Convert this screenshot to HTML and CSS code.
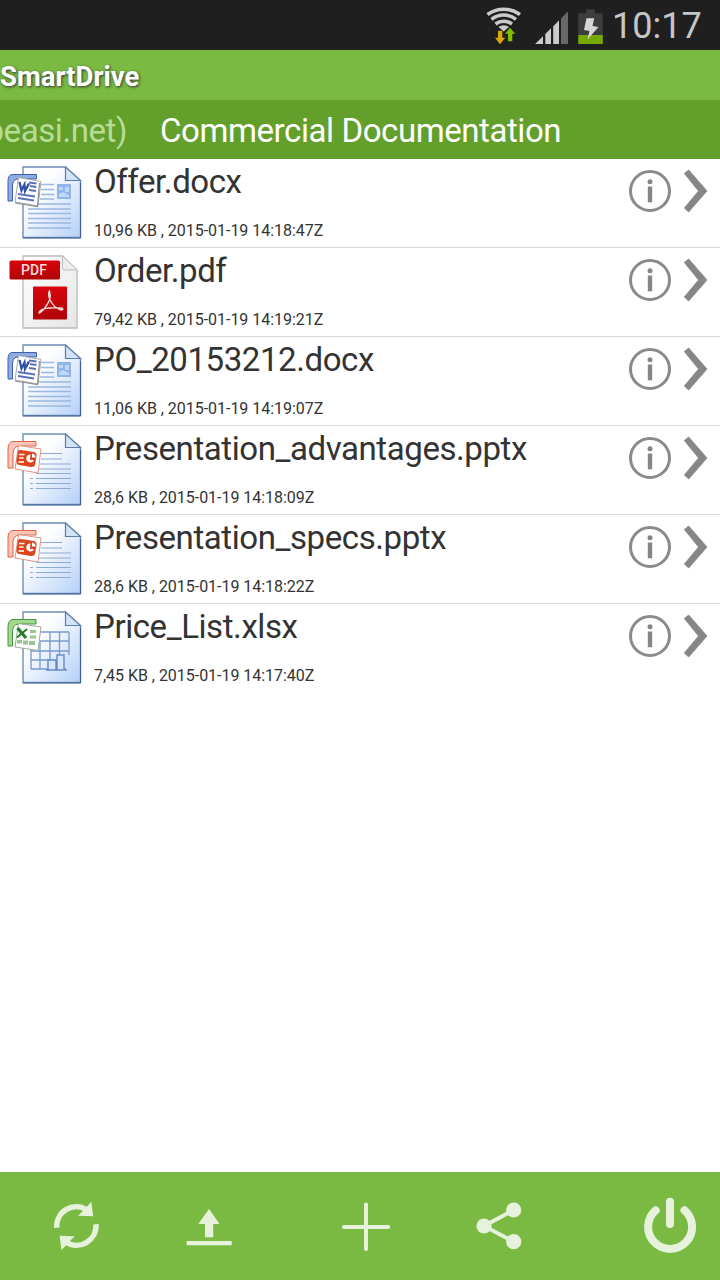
FILE: index.html
```
<!DOCTYPE html>
<html lang="en">

<head>
    <meta charset="UTF-8">
    <meta name="viewport" content="width=device-width, initial-scale=1.0">
    <title>SmartDrive</title>
    <link rel="stylesheet" href="styles.css">
</head>

<body>
    <!-- shared icons -->
    <svg class="defs" width="0" height="0">
        <defs>
            <linearGradient id="paper" x1="0" y1="0" x2="1" y2="1">
                <stop offset="0.3" stop-color="#fff" />
                <stop offset="1" stop-color="#b4d0f8" />
            </linearGradient>
            <linearGradient id="pdfPaper" x1="0" y1="0" x2="1" y2="1">
                <stop offset="0" stop-color="#fff" />
                <stop offset="1" stop-color="#e6e6e6" />
            </linearGradient>
            <linearGradient id="red" x1="0" y1="0" x2="0" y2="1">
                <stop offset="0" stop-color="#d8040c" />
                <stop offset="1" stop-color="#b00508" />
            </linearGradient>
        </defs>
        <symbol id="page" viewBox="0 0 84 88">
            <path d="M23 8H65.500L80.500 22V78.500H23Z" fill="url(#paper)" stroke="#6f8db5" stroke-width="1.400" />
            <path d="M65.500 8V21.500H80.500Z" fill="#d3e3f8" stroke="#5c7eaa" stroke-width="1.200" />
            <path d="M23 79H80.500V24" fill="none" stroke="#3d5f94" stroke-width="1" />
        </symbol>
        <symbol id="docx" viewBox="0 0 84 88">
            <use href="#page" />
            <path d="M41 25.500H54M41 30.500H54M41 35.500H54M40 40H54M28 45H71M28 50H71M28 54.500H71M28 59.500H71M28 64H71M28 69H71" stroke="#9ab8e0" stroke-width="1.300" />
            <rect x="57" y="25" width="14" height="15" fill="#8fb5ea" />
            <path d="M59 28h4v3h-4zM65 28h4v5h-4zM59 35l4-2 6 3v2H59z" fill="#c0d7f6" />
            <path d="M12 15.500H36.500V20H17Q12.500 21 12.500 27V42H8V22Q8 16 12 15.500Z" fill="#8eabe2" stroke="#3f5fae" />
            <path d="M18.500 18.500L41 22.500L38 47L15 43Z" fill="#fff" stroke="#a9a9ae" />
            <path d="M39.500 24L37.500 47.500L15 44" fill="none" stroke="#8c8c90" stroke-width="1.200" />
            <path d="M19.500 23L21.500 31.500L24.500 25.500L25 32L29 24.500" fill="none" stroke="#3451a5" stroke-width="2.300" />
            <path d="M29 23.500L36.500 24.500M30 27L36.500 28M29 31L36 32M18 35L35 37.500M18 39L34 41.500" stroke="#5871ba" stroke-width="1.800" />
        </symbol>
        <symbol id="pdf" viewBox="0 0 84 88">
            <path d="M23 8H62.500L77 22V80H23Z" fill="url(#pdfPaper)" stroke="#bbb" stroke-width="1.300" />
            <path d="M62.500 8V20Q62.500 22 65 22H77Z" fill="#eee" stroke="#bbb" />
            <rect x="9.500" y="12.500" width="50.500" height="19" rx="1.500" fill="url(#red)" />
            <text x="21" y="26.800" class="pdfLabel" textLength="26">PDF</text>
            <rect x="33" y="38.500" width="34" height="33" rx="1" fill="url(#red)" />
            <path d="M49.500 43Q51 48 49.500 52Q46 60 40.500 64.500Q38 66 39.500 63.500Q43 59 61 60Q65 61 61 62Q54 60 50 52Q47.500 45 49.500 43Z" fill="none" stroke="#f4dcdc" stroke-width="1.400" />
        </symbol>
        <symbol id="pptx" viewBox="0 0 84 88">
            <use href="#page" />
            <path d="M41 27.500H62M41 33H62M40 38H71M36 43H71M36 47.500H71M36 52.500H71M36 57.500H71M36 62.500H71M30 52.500h3M30 57.500h3M30 62.500h3" stroke="#8fabd2" stroke-width="1.200" />
            <path d="M13 15.500H36V20H19Q13 21 13 28V42H8V23Q8 16 13 15.500Z" fill="#fbc6b8" stroke="#dd6249" />
            <path d="M18.500 19.500L41 23L38 47L15 43Z" fill="#fff" stroke="#e59582" />
            <path d="M18 25Q19 23.500 21 24L34 26Q37 27 36.500 30L35 39Q34 41.500 31 41L19 39Q16 38 16.500 35Z" fill="#dc441e" />
            <path d="M19 28.500h5.500M19 32h4.500M18.500 36h5.500" stroke="#fff" stroke-width="1.700" />
            <path d="M30.500 28.500A4 4 0 1 0 34 34H30Z" fill="#fff" />
            <path d="M32 27.500V31.500H35.500Q35.500 28 32 27.500Z" fill="#fff" />
        </symbol>
        <symbol id="xlsx" viewBox="0 0 84 88">
            <use href="#page" />
            <path d="M41 28H69M38 37H69M31 47H69M31 56H50M31 65H66M31 46V65M40 38V65M50 28V56M59.500 28V50M69 28V51" fill="none" stroke="#7899ce" stroke-width="1.300" />
            <path d="M48 66V56h8V66M57 66V51h7V66M46 66h21" fill="#d8e6fa" stroke="#6589c2" stroke-width="1.400" />
            <path d="M13 15.500H36V20H18Q12.500 21 12.500 28V42H8V23Q8 16 13 15.500Z" fill="#a4d891" stroke="#40963a" />
            <path d="M18.500 19.500L41 23L38 46.500L15 43Z" fill="#fff" stroke="#9ea99b" />
            <path d="M30 26h6v3h-6zM30 31.500h6v3h-6zM29 37h6v4h-6zM23 36.500h5v4h-5zM17 36h5v3.500h-5z" fill="#9bc58e" />
            <path d="M17.500 24L26 34" stroke="#247f28" stroke-width="3.200" />
            <path d="M27 25L17 33.500" stroke="#247f28" stroke-width="2" />
        </symbol>
        <symbol id="actions" viewBox="0 0 110 88">
            <circle cx="40" cy="32" r="19.500" fill="none" stroke="#8a8a8a" stroke-width="3" />
            <circle cx="40" cy="22.800" r="2.500" fill="#868686" />
            <path d="M37.800 27.500h4.400v15.800h-4.400z" fill="#868686" />
            <path d="M74.300 14.500L78.700 11L97 32L78.700 53L74.300 49L88.500 32Z" fill="#868686" stroke="#868686" stroke-width="0.800" />
        </symbol>
    </svg>

    <div class="statusBar">
        <svg class="wifi" width="36" height="50" viewBox="486 0 36 50">
            <g fill="none" stroke="#cbcbcb" stroke-width="3.500">
                <path d="M487.500 14.500A27.500 27.500 0 0 1 520 14.500" />
                <path d="M491.500 19.300A20 20 0 0 1 516 19.300" />
                <path d="M495.500 24A13.500 13.500 0 0 1 512 24" />
            </g>
            <path d="M498.300 26.800Q503.700 23.500 509 26.800L503.700 31.500Z" fill="#cbcbcb" />
            <path d="M498 30.700h4.300v7h3L500 44.300L495 37.700h3z" fill="#d9a60d" />
            <path d="M510 27.700L515.300 33.700h-3v7.600H508v-7.600h-3z" fill="#84bd00" />
        </svg>
        <svg class="signal" width="34" height="50" viewBox="535 0 34 50">
            <path d="M535 44L543 36.200V44ZM545.300 44V34L551 28.300V44ZM553.200 44V26.200L559 20.500V44Z" fill="#cbcbcb" />
            <path d="M561 44V18.500L568 11.500V44Z" fill="#686868" />
        </svg>
        <svg class="battery" width="25" height="50" viewBox="577.500 0 25 50">
            <path d="M577.700 13.300h8v-4h8.600v4h8V35h-24.600z" fill="#3d3d3d" />
            <path d="M577.700 35h24.600v9h-24.600z" fill="#77a800" />
            <path d="M586 18.300H593.700L592 26L598 27L587 39.500L589 31L583.500 30Z" fill="#d6d6d6" />
        </svg>
        <span class="clock">10:17</span>
    </div>

    <div class="titleBar">SmartDrive</div>

    <div class="pathBar">
        <span class="parent">(peasi.net)</span>
        <span class="current">Commercial Documentation</span>
    </div>

    <ul class="fileList">
        <li>
            <svg class="fileIcon"><use href="#docx" /></svg>
            <div class="fileInfo">
                <div class="name">Offer.docx</div>
                <div class="detail">10,96 KB , 2015-01-19 14:18:47Z</div>
            </div>
            <svg class="actions"><use href="#actions" /></svg>
        </li>
        <li>
            <svg class="fileIcon"><use href="#pdf" /></svg>
            <div class="fileInfo">
                <div class="name">Order.pdf</div>
                <div class="detail">79,42 KB , 2015-01-19 14:19:21Z</div>
            </div>
            <svg class="actions"><use href="#actions" /></svg>
        </li>
        <li>
            <svg class="fileIcon"><use href="#docx" /></svg>
            <div class="fileInfo">
                <div class="name">PO_20153212.docx</div>
                <div class="detail">11,06 KB , 2015-01-19 14:19:07Z</div>
            </div>
            <svg class="actions"><use href="#actions" /></svg>
        </li>
        <li>
            <svg class="fileIcon"><use href="#pptx" /></svg>
            <div class="fileInfo">
                <div class="name">Presentation_advantages.pptx</div>
                <div class="detail">28,6 KB , 2015-01-19 14:18:09Z</div>
            </div>
            <svg class="actions"><use href="#actions" /></svg>
        </li>
        <li>
            <svg class="fileIcon"><use href="#pptx" /></svg>
            <div class="fileInfo">
                <div class="name">Presentation_specs.pptx</div>
                <div class="detail">28,6 KB , 2015-01-19 14:18:22Z</div>
            </div>
            <svg class="actions"><use href="#actions" /></svg>
        </li>
        <li>
            <svg class="fileIcon"><use href="#xlsx" /></svg>
            <div class="fileInfo">
                <div class="name">Price_List.xlsx</div>
                <div class="detail">7,45 KB , 2015-01-19 14:17:40Z</div>
            </div>
            <svg class="actions"><use href="#actions" /></svg>
        </li>
    </ul>

    <div class="toolBar">
        <svg class="refresh" viewBox="0 0 60 60">
            <g id="half">
                <path d="M10.800 31.700A19.500 19.500 0 0 1 41 14" fill="none" stroke="#e6f2dc" stroke-width="5.500" />
                <path d="M45.300 5.700L47.200 20.300L32 19.700L37 15Z" fill="#e6f2dc" />
            </g>
            <use href="#half" transform="rotate(180 30.400 30)" />
        </svg>
        <svg class="upload" viewBox="0 0 60 60">
            <path d="M30 13L40.500 28H34.200V41.300H26V28H19.300ZM7.700 45H52.700V49.300H7.700Z" fill="#e6f2dc" />
        </svg>
        <svg class="add" viewBox="0 0 60 60">
            <path d="M30 8.500V53M7.800 31H52.200" stroke="#e6f2dc" stroke-width="4" stroke-linecap="round" />
        </svg>
        <svg class="share" viewBox="0 0 60 60">
            <path d="M44.700 14L15 30L44.700 45.700" fill="none" stroke="#e6f2dc" stroke-width="3.800" />
            <circle cx="15" cy="30" r="7.600" fill="#e6f2dc" />
            <circle cx="44.700" cy="14" r="7.600" fill="#e6f2dc" />
            <circle cx="44.700" cy="45.700" r="7.600" fill="#e6f2dc" />
        </svg>
        <svg class="power" viewBox="0 0 60 60">
            <path d="M15.700 14.300A22 22 0 1 0 44.500 14.300M30 5.700V28" fill="none" stroke="#e6f2dc" stroke-width="8" stroke-linecap="round" />
        </svg>
    </div>
</body>

</html>
```
FILE: styles.css
```
body {
    height: 1280px;
    margin: 0;
    display: flex;
    flex-direction: column;
    overflow: hidden;
    background: #fff;
    font-family: Roboto, "Liberation Sans", sans-serif;
}

svg {
    display: block;
    flex-shrink: 0;
}

.defs {
    position: absolute;
}

.statusBar {
    box-sizing: border-box;
    height: 50px;
    padding-right: 19px;
    display: flex;
    justify-content: flex-end;
    background: #1f1f1f;
}

.signal {
    margin-left: 13px;
}

.battery {
    margin-left: 9px;
}

.clock {
    width: 89px;
    margin-left: 9px;
    line-height: 52px;
    font-size: 36px;
    color: #c6c6c6;
    white-space: nowrap;
}

.titleBar {
    height: 50px;
    line-height: 54px;
    font-size: 27.500px;
    font-weight: 700;
    color: #fff;
    background: #7aba42;
    text-shadow: 1px 1px 3px #333;
}

.pathBar {
    height: 59px;
    display: flex;
    overflow: hidden;
    line-height: 62px;
    font-size: 33px;
    letter-spacing: -0.420px;
    color: #fff;
    background: #62a02b;
    white-space: nowrap;
}

/* only the end of the parent folder is visible */
.parent {
    width: 127px;
    display: flex;
    justify-content: flex-end;
    overflow: hidden;
    color: #b8dc98;
}

.current {
    margin-left: 33px;
}

.fileList {
    flex: 1;
    margin: 0;
    padding: 0;
    list-style: none;
}

.fileList li {
    height: 88px;
    display: flex;
    border-bottom: 1px solid #d8d8d8;
}

.fileList li:last-child {
    border-bottom: none;
}

.fileIcon {
    width: 84px;
    height: 88px;
}

.fileInfo {
    flex: 1;
    margin-left: 10px;
    color: #333;
    white-space: nowrap;
}

.name {
    height: 46px;
    line-height: 46px;
    font-size: 33px;
    letter-spacing: -0.420px;
}

.detail {
    height: 42px;
    line-height: 52px;
    font-size: 16px;
    letter-spacing: -0.030px;
}

.actions {
    width: 110px;
    height: 88px;
}

.pdfLabel {
    font-size: 14px;
    font-weight: 500;
    fill: #fbdcdc;
}

.toolBar {
    height: 108px;
    display: flex;
    align-items: center;
    background: #7aba42;
}

.toolBar svg {
    width: 60px;
    height: 60px;
}

.refresh {
    margin-left: 46px;
}

.upload {
    margin-left: 73px;
}

.add {
    margin-left: 97px;
}

.share {
    margin-left: 73px;
}

.power {
    margin-left: 111px;
}
```
